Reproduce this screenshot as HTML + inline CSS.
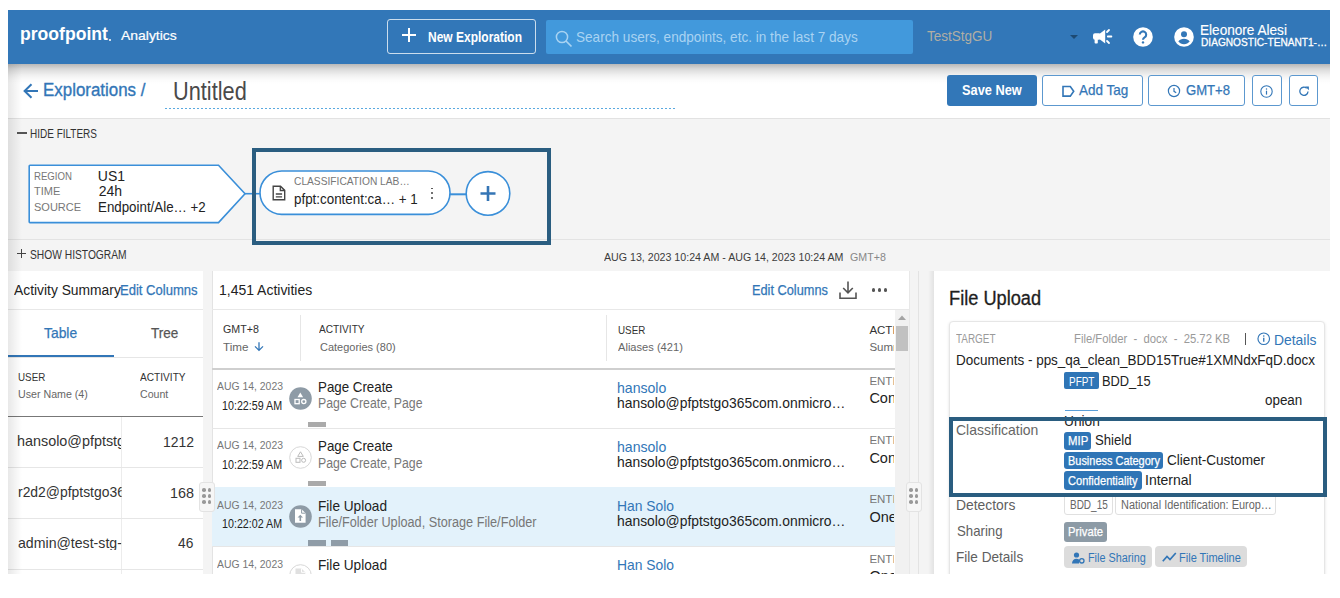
<!DOCTYPE html>
<html><head><meta charset="utf-8"><style>
html,body{margin:0;padding:0;background:#fff;width:1340px;height:598px;overflow:hidden;}
body{font-family:"Liberation Sans", sans-serif;position:relative;}
.t{position:absolute;white-space:nowrap;line-height:1;}
div{box-sizing:border-box;}
svg{position:absolute;overflow:visible;}
</style></head><body><div style="position:absolute;left:0;top:0;width:1340px;height:574px;overflow:hidden">
<div style="position:absolute;left:8px;top:10px;width:1322px;height:564px;background:#f4f4f4"></div>
<div style="position:absolute;left:8px;top:10px;width:1322px;height:54px;background:#3277b8"></div>
<div style="position:absolute;left:8px;top:64px;width:1322px;height:55px;background:#fff;border-bottom:1px solid #e2e2e2"></div>
<div style="position:absolute;left:8px;top:64px;width:1322px;height:20px;background:linear-gradient(rgba(0,0,0,.28),rgba(0,0,0,.15) 25%,rgba(0,0,0,.06) 55%,rgba(0,0,0,.015) 80%,rgba(0,0,0,0))"></div>
<div style="position:absolute;left:8px;top:239px;width:1322px;height:1px;background:#e3e3e3"></div>
<div style="position:absolute;left:109px;top:39px;width:2px;height:2px;background:#fff;border-radius:1px"></div>
<div style="position:absolute;left:387px;top:19px;width:149px;height:35px;border:1px solid rgba(255,255,255,.75);border-radius:3px"></div>
<div style="position:absolute;left:402px;top:34px;width:14px;height:2px;background:#fff"></div>
<div style="position:absolute;left:408px;top:28px;width:2px;height:14px;background:#fff"></div>
<div style="position:absolute;left:546px;top:20px;width:367px;height:34px;background:#4299dc;border-radius:2px"></div>
<svg style="left:555px;top:30px" width="18" height="18" viewBox="0 0 18 18"><circle cx="7" cy="7" r="5.6" fill="none" stroke="#a9d3f2" stroke-width="1.5"/><line x1="11" y1="11" x2="16.5" y2="16.5" stroke="#a9d3f2" stroke-width="1.7"/></svg>
<svg style="left:1070px;top:35px" width="8" height="4" viewBox="0 0 8 4"><path d="M0 0H8L4 4Z" fill="#1d4a73"/></svg>
<svg style="left:1092px;top:28px" width="21" height="17" viewBox="0 0 21 17"><rect x="1" y="5.3" width="8" height="6.4" rx="2" fill="#fff"/><path d="M8 5.5L13.2 1.5V15.5L8 11.5z" fill="#fff"/><rect x="2.6" y="10" width="3.2" height="5.6" rx=".8" fill="#fff"/><path d="M15 4l2-2M15.8 8.5h3.6M15 13l2 2" stroke="#fff" stroke-width="1.8" stroke-linecap="round"/></svg>
<svg style="left:1133px;top:26.5px" width="20" height="20" viewBox="0 0 20 20"><circle cx="10" cy="10" r="9.8" fill="#fff"/><path d="M6.8 7.6a3.2 3.2 0 1 1 4.8 2.8c-1 .6-1.6 1.1-1.6 2.4" fill="none" stroke="#3277b8" stroke-width="2.1"/><circle cx="10" cy="15.4" r="1.2" fill="#3277b8"/></svg>
<svg style="left:1174px;top:26.5px" width="20" height="20" viewBox="0 0 20 20"><circle cx="10" cy="10" r="9.8" fill="#fff"/><circle cx="10" cy="7.3" r="3" fill="#3277b8"/><path d="M4.3 14.6c1.3-2 3.3-2.9 5.7-2.9s4.4.9 5.7 2.9c-1.4 1.6-3.4 2.6-5.7 2.6s-4.3-1-5.7-2.6z" fill="#3277b8"/></svg>
<svg style="left:23px;top:83px" width="16" height="16" viewBox="0 0 16 16"><path d="M15 8H2M8.5 1.3L1.6 8l6.9 6.7" fill="none" stroke="#3276b7" stroke-width="2"/></svg>
<div style="position:absolute;left:165px;top:107.5px;width:511px;height:1.0px;background:repeating-linear-gradient(90deg,#5aa9e0 0 2px,transparent 2px 4px)"></div>
<div style="position:absolute;left:947px;top:75px;width:90px;height:31px;background:#3277b8;border-radius:3px"></div>
<div style="position:absolute;left:1042px;top:75px;width:101px;height:31px;border:1px solid #5c98cf;border-radius:3px;background:#fff"></div>
<svg style="left:1061.5px;top:82.5px" width="13" height="14" viewBox="0 0 13 14"><path d="M1 3.5h7.3l3.4 4.8-3.4 4.8H1z" fill="none" stroke="#3276b7" stroke-width="1.6"/></svg>
<div style="position:absolute;left:1148px;top:75px;width:97px;height:31px;border:1px solid #5c98cf;border-radius:3px;background:#fff"></div>
<svg style="left:1167px;top:84px" width="14" height="14" viewBox="0 0 14 14"><circle cx="7" cy="7" r="5.6" fill="none" stroke="#3276b7" stroke-width="1.2"/><path d="M7 4V7.3l2.2 1.4" fill="none" stroke="#3276b7" stroke-width="1.2"/></svg>
<div style="position:absolute;left:1252px;top:75px;width:30px;height:31px;border:1px solid #5c98cf;border-radius:3px;background:#fff"></div>
<svg style="left:1260px;top:84.5px" width="13" height="13" viewBox="0 0 13 13"><circle cx="6.5" cy="6.5" r="5.7" fill="none" stroke="#3276b7" stroke-width="1.1"/><path d="M6.5 5.7v3.9" stroke="#3276b7" stroke-width="1.2"/><circle cx="6.5" cy="3.9" r=".75" fill="#3276b7"/></svg>
<div style="position:absolute;left:1289px;top:75px;width:29px;height:31px;border:1px solid #5c98cf;border-radius:3px;background:#fff"></div>
<svg style="left:1297.5px;top:85px" width="12" height="12" viewBox="0 0 12 12"><path d="M10 6.5A4.1 4.1 0 1 1 8.7 3.3" fill="none" stroke="#3276b7" stroke-width="1.3"/><path d="M7.3 1.6h3.6v3.6z" fill="#3276b7"/></svg>
<div style="position:absolute;left:17.3px;top:132.4px;width:9.599999999999998px;height:1.4000000000000057px;background:#555"></div>
<svg style="left:0;top:0" width="1340" height="598"><path d="M30 165.2H218.5L245 193.7L218.5 222.6H30Q29.2 222.6 29.2 221.8V166Q29.2 165.2 30 165.2Z" fill="#fff" stroke="#3a8fd9" stroke-width="1.6"/><path d="M245 193.7H260" stroke="#3a8fd9" stroke-width="1.6"/><rect x="260" y="171" width="190" height="43.4" rx="21.7" fill="#fff" stroke="#3a8fd9" stroke-width="1.6"/><path d="M450 194.3H467" stroke="#3a8fd9" stroke-width="2"/><circle cx="488" cy="193.4" r="21.8" fill="#fff" stroke="#3a8fd9" stroke-width="1.6"/><path d="M488 186v15M480.5 193.5h15" stroke="#3575b5" stroke-width="2.6"/></svg>
<svg style="left:272px;top:185px" width="14" height="16" viewBox="0 0 14 16"><path d="M1.2 1.2h7.3l4.2 4.2v9.4H1.2z" fill="none" stroke="#444" stroke-width="1.4"/><path d="M8.3 1.2v4.3h4.3M3.8 9h6.3M3.8 11.8h6.3" fill="none" stroke="#444" stroke-width="1.3"/></svg>
<div style="position:absolute;left:431.4px;top:187.6px;width:1.900000000000034px;height:1.9000000000000057px;background:#444;border-radius:50%"></div>
<div style="position:absolute;left:431.4px;top:192.4px;width:1.900000000000034px;height:1.9000000000000057px;background:#444;border-radius:50%"></div>
<div style="position:absolute;left:431.4px;top:197.2px;width:1.900000000000034px;height:1.9000000000000057px;background:#444;border-radius:50%"></div>
<div style="position:absolute;left:17.2px;top:253px;width:9.100000000000001px;height:1.4000000000000057px;background:#444"></div>
<div style="position:absolute;left:21px;top:249px;width:1.3999999999999986px;height:9px;background:#444"></div>
<div style="position:absolute;left:8px;top:270.5px;width:194.6px;height:303.5px;background:#fff"></div>
<div style="position:absolute;left:8px;top:309px;width:194.6px;height:1px;background:#e8e8e8"></div>
<div style="position:absolute;left:8px;top:357px;width:194.6px;height:1px;background:#e6e6e6"></div>
<div style="position:absolute;left:8px;top:355.2px;width:105.6px;height:2.1999999999999886px;background:#3276b7"></div>
<div style="position:absolute;left:8px;top:415.5px;width:194.6px;height:1.5px;background:#777"></div>
<div style="position:absolute;left:121px;top:417px;width:1px;height:157px;background:#ececec"></div>
<div style="position:absolute;left:8px;top:467.2px;width:194.6px;height:1.0px;background:#e6e6e6"></div>
<div style="position:absolute;left:8px;top:517.9px;width:194.6px;height:1.0px;background:#e6e6e6"></div>
<div style="position:absolute;left:8px;top:568.6px;width:194.6px;height:1.0px;background:#e6e6e6"></div>
<div style="position:absolute;left:212px;top:270.5px;width:697px;height:303.5px;background:#fff;border-left:1px solid #e3e3e3"></div>
<div style="position:absolute;left:212px;top:309px;width:697px;height:1px;background:#e8e8e8"></div>
<svg style="left:839px;top:281px" width="18" height="18" viewBox="0 0 18 18"><path d="M9 0.5v11M4.2 7l4.8 4.8L13.8 7" fill="none" stroke="#555" stroke-width="1.6"/><path d="M1 11.5v5.8h16v-5.8" fill="none" stroke="#555" stroke-width="1.6"/></svg>
<div style="position:absolute;left:871.9px;top:288.4px;width:3.2000000000000455px;height:3.2000000000000455px;background:#555;border-radius:50%"></div>
<div style="position:absolute;left:877.9px;top:288.4px;width:3.2000000000000455px;height:3.2000000000000455px;background:#555;border-radius:50%"></div>
<div style="position:absolute;left:883.9px;top:288.4px;width:3.2000000000000455px;height:3.2000000000000455px;background:#555;border-radius:50%"></div>
<svg style="left:253.5px;top:342.3px" width="10" height="9" viewBox="0 0 10 9"><path d="M5 0.3v8.2M1 4.4L5 8.4l4-4" fill="none" stroke="#3276b7" stroke-width="1.3"/></svg>
<div style="position:absolute;left:300px;top:315px;width:1px;height:46px;background:#e6e6e6"></div>
<div style="position:absolute;left:605.5px;top:315px;width:1.0px;height:46px;background:#e6e6e6"></div>
<div style="position:absolute;left:212px;top:368.2px;width:683px;height:1.8000000000000114px;background:#cfcfcf"></div>
<div style="position:absolute;left:212px;top:427.8px;width:683px;height:1.0px;background:#e6e6e6"></div>
<svg style="left:289.2px;top:386.5px" width="23" height="23" viewBox="0 0 23 23"><circle cx="11.5" cy="11.5" r="11.3" fill="#8e9ba6"/><path d="M11.3 5.4l2.8 4.8H8.5z" fill="#fff"/><rect x="6" y="12.5" width="4.2" height="4.2" fill="none" stroke="#fff" stroke-width="1.3"/><circle cx="14.8" cy="14.6" r="2.1" fill="none" stroke="#fff" stroke-width="1.3"/></svg>
<div style="position:absolute;left:308.2px;top:421.59999999999997px;width:17.80000000000001px;height:5.800000000000011px;background:#aaaaaa"></div>
<div style="position:absolute;left:212px;top:486.90000000000003px;width:683px;height:1.0px;background:#e6e6e6"></div>
<svg style="left:289.2px;top:445.6px" width="23" height="23" viewBox="0 0 23 23"><circle cx="11.5" cy="11.5" r="10.8" fill="#fff" stroke="#d8d8d8" stroke-width="1"/><path d="M11.5 5.8l2.8 4.6H8.7z" fill="none" stroke="#bbb" stroke-width="1"/><rect x="7" y="12.3" width="4" height="4" fill="none" stroke="#bbb" stroke-width="1"/><circle cx="14.6" cy="14.3" r="2" fill="none" stroke="#bbb" stroke-width="1"/></svg>
<div style="position:absolute;left:308.2px;top:480.7px;width:17.80000000000001px;height:5.800000000000011px;background:#aaaaaa"></div>
<div style="position:absolute;left:212px;top:487.4px;width:683px;height:59.10000000000002px;background:#e3f2fb"></div>
<div style="position:absolute;left:212px;top:546.0px;width:683px;height:1.0px;background:#e6e6e6"></div>
<svg style="left:289.2px;top:504.70000000000005px" width="23" height="23" viewBox="0 0 23 23"><circle cx="11.5" cy="11.5" r="11.3" fill="#8e9ba6"/><path d="M6 4.2h6.6l4 4v9.5H6z" fill="#fff"/><path d="M12.6 4.2v4h4" fill="none" stroke="#8e9ba6" stroke-width="1"/><path d="M11.3 16v-4.2" stroke="#8e9ba6" stroke-width="1.6"/><path d="M8.6 12.6l2.7-2.8 2.7 2.8z" fill="#8e9ba6"/></svg>
<div style="position:absolute;left:308.2px;top:539.8px;width:17.80000000000001px;height:5.800000000000068px;background:#8f9ca7"></div>
<div style="position:absolute;left:330.6px;top:539.8px;width:17.399999999999977px;height:5.800000000000068px;background:#8f9ca7"></div>
<div style="position:absolute;left:212px;top:605.1px;width:683px;height:1.0px;background:#e6e6e6"></div>
<svg style="left:289.2px;top:563.8px" width="23" height="23" viewBox="0 0 23 23"><circle cx="11.5" cy="11.5" r="10.8" fill="#fff" stroke="#d8d8d8" stroke-width="1"/><path d="M6.5 4.5h6l3.8 3.8v9.5H6.5z" fill="#e0e0e0"/><path d="M12.5 4.5v3.8h3.8" fill="none" stroke="#fff" stroke-width="1"/></svg>
<div style="position:absolute;left:308.2px;top:598.9px;width:17.80000000000001px;height:5.800000000000068px;background:#aaaaaa"></div>
<div style="position:absolute;left:330.6px;top:598.9px;width:17.399999999999977px;height:5.800000000000068px;background:#aaaaaa"></div>
<div style="position:absolute;left:895px;top:310px;width:14px;height:264px;background:#f1f1f1"></div>
<div style="position:absolute;left:896px;top:326px;width:12px;height:24.600000000000023px;background:#c1c1c1"></div>
<svg style="left:898px;top:315px" width="8" height="5" viewBox="0 0 8 5"><path d="M0 5L4 0.5L8 5Z" fill="#a3a3a3"/></svg>
<div style="position:absolute;left:918px;top:270.5px;width:1px;height:303.5px;background:#e3e3e3"></div>
<div style="position:absolute;left:909px;top:270.5px;width:1px;height:303.5px;background:#e8e8e8"></div>
<div style="position:absolute;left:199.2px;top:481.7px;width:16.30000000000001px;height:30.80000000000001px;background:#f6f6f6;border:1px solid #e3e3e3;border-radius:3px"></div>
<div style="position:absolute;left:202.39999999999998px;top:488.29999999999995px;width:3.6000000000000227px;height:3.6000000000000227px;background:#999;border-radius:50%"></div>
<div style="position:absolute;left:202.39999999999998px;top:494.4px;width:3.6000000000000227px;height:3.6000000000000227px;background:#999;border-radius:50%"></div>
<div style="position:absolute;left:202.39999999999998px;top:500.0px;width:3.6000000000000227px;height:3.6000000000000227px;background:#999;border-radius:50%"></div>
<div style="position:absolute;left:207.89999999999998px;top:488.29999999999995px;width:3.6000000000000227px;height:3.6000000000000227px;background:#999;border-radius:50%"></div>
<div style="position:absolute;left:207.89999999999998px;top:494.4px;width:3.6000000000000227px;height:3.6000000000000227px;background:#999;border-radius:50%"></div>
<div style="position:absolute;left:207.89999999999998px;top:500.0px;width:3.6000000000000227px;height:3.6000000000000227px;background:#999;border-radius:50%"></div>
<div style="position:absolute;left:905.8px;top:481.7px;width:16.299999999999955px;height:30.80000000000001px;background:#f6f6f6;border:1px solid #e3e3e3;border-radius:3px"></div>
<div style="position:absolute;left:909.0px;top:488.29999999999995px;width:3.599999999999909px;height:3.6000000000000227px;background:#999;border-radius:50%"></div>
<div style="position:absolute;left:909.0px;top:494.4px;width:3.599999999999909px;height:3.6000000000000227px;background:#999;border-radius:50%"></div>
<div style="position:absolute;left:909.0px;top:500.0px;width:3.599999999999909px;height:3.6000000000000227px;background:#999;border-radius:50%"></div>
<div style="position:absolute;left:914.5px;top:488.29999999999995px;width:3.599999999999909px;height:3.6000000000000227px;background:#999;border-radius:50%"></div>
<div style="position:absolute;left:914.5px;top:494.4px;width:3.599999999999909px;height:3.6000000000000227px;background:#999;border-radius:50%"></div>
<div style="position:absolute;left:914.5px;top:500.0px;width:3.599999999999909px;height:3.6000000000000227px;background:#999;border-radius:50%"></div>
<div style="position:absolute;left:934px;top:270.5px;width:396px;height:303.5px;background:#fff"></div>
<div style="position:absolute;left:928px;top:270.5px;width:6px;height:303.5px;background:linear-gradient(90deg,rgba(0,0,0,0),rgba(0,0,0,.07))"></div>
<div style="position:absolute;left:948.5px;top:321px;width:376.79999999999995px;height:279px;border:1px solid #e6e6e6;border-radius:4px;background:#fff;box-shadow:0 1px 3px rgba(0,0,0,.12)"></div>
<div style="position:absolute;left:1244.7px;top:333.4px;width:1.0px;height:11.600000000000023px;background:#555"></div>
<svg style="left:1257px;top:332px" width="13.5" height="13.5" viewBox="0 0 14 14"><circle cx="7" cy="7" r="6" fill="none" stroke="#3276b7" stroke-width="1.2"/><path d="M7 6v4.2" stroke="#3276b7" stroke-width="1.4"/><circle cx="7" cy="4.1" r=".85" fill="#3276b7"/></svg>
<div style="position:absolute;left:1064.2px;top:372.4px;width:34.5px;height:16.5px;background:#2f75b6;border-radius:2px"></div>
<div style="position:absolute;left:1064.6px;top:410px;width:33.40000000000009px;height:1px;background:#5a9fd8"></div>
<div style="position:absolute;left:1064px;top:431.8px;width:27px;height:18.0px;background:#2f75b6;border-radius:3px"></div>
<div style="position:absolute;left:1064px;top:451.5px;width:99px;height:17.899999999999977px;background:#2f75b6;border-radius:3px"></div>
<div style="position:absolute;left:1064px;top:471px;width:77.5px;height:18.5px;background:#2f75b6;border-radius:3px"></div>
<div style="position:absolute;left:1064.2px;top:494px;width:48.59999999999991px;height:21.299999999999955px;border:1px solid #e0e0e0;border-radius:3px;background:#fff"></div>
<div style="position:absolute;left:1115.4px;top:494px;width:161.0px;height:21.299999999999955px;border:1px solid #e0e0e0;border-radius:3px;background:#fff"></div>
<div style="position:absolute;left:1064.2px;top:522px;width:43.09999999999991px;height:19.899999999999977px;background:#8d9ba6;border-radius:3px"></div>
<div style="position:absolute;left:1064.2px;top:546px;width:87.79999999999995px;height:22px;background:#dcdcdc;border-radius:4px"></div>
<svg style="left:1072px;top:551.5px" width="13" height="12" viewBox="0 0 13 12"><circle cx="4.5" cy="3" r="2.6" fill="#3276b7"/><path d="M0 11.5c0-3 2-4.8 4.5-4.8 1 0 1.8.2 2.5.7V11.5z" fill="#3276b7"/><circle cx="9.8" cy="8.8" r="2.2" fill="none" stroke="#3276b7" stroke-width="1.3"/></svg>
<div style="position:absolute;left:1155.2px;top:546px;width:91.70000000000005px;height:21.399999999999977px;background:#dcdcdc;border-radius:4px"></div>
<svg style="left:1161.5px;top:552px" width="14.5" height="10" viewBox="0 0 14.5 10"><path d="M0.8 9.2L5 4.5l3 3L13.8 1" fill="none" stroke="#3276b7" stroke-width="1.7"/></svg>
<div class="t" style="left:20.02px;top:25.36px;font-size:18px;color:#fff;font-weight:700;transform:scaleX(0.9778);transform-origin:0 0;">proofpoint</div>
<div class="t" style="left:121.00px;top:29.17px;font-size:13.5px;color:#fff;transform:scaleX(1.0319);transform-origin:0 0;-webkit-text-stroke:0.2px #fff;">Analytics</div>
<div class="t" style="left:427.50px;top:29.65px;font-size:14px;color:#fff;font-weight:700;transform:scaleX(0.8568);transform-origin:0 0;">New Exploration</div>
<div class="t" style="left:575.50px;top:30.03px;font-size:14.5px;color:#a9d3f2;transform:scaleX(0.9371);transform-origin:0 0;">Search users, endpoints, etc. in the last 7 days</div>
<div class="t" style="left:926.70px;top:28.30px;font-size:15px;color:#b0aea4;transform:scaleX(0.9011);transform-origin:0 0;">TestStgGU</div>
<div class="t" style="left:1199.56px;top:22.53px;font-size:14.5px;color:#fff;transform:scaleX(0.9374);transform-origin:0 0;-webkit-text-stroke:0.15px #fff;">Eleonore Alesi</div>
<div class="t" style="left:1200.50px;top:36.97px;font-size:11.5px;color:#fff;transform:scaleX(0.8813);transform-origin:0 0;-webkit-text-stroke:0.3px #fff;">DIAGNOSTIC-TENANT1-…</div>
<div class="t" style="left:43.06px;top:80.56px;font-size:18px;color:#3276b7;transform:scaleX(0.9393);transform-origin:0 0;-webkit-text-stroke:0.35px currentColor;">Explorations /</div>
<div class="t" style="left:173.23px;top:78.64px;font-size:25px;color:#4a4a4a;transform:scaleX(0.8701);transform-origin:0 0;">Untitled</div>
<div class="t" style="left:962.00px;top:83.33px;font-size:14.5px;color:#fff;font-weight:700;transform:scaleX(0.8827);transform-origin:0 0;">Save New</div>
<div class="t" style="left:1079.00px;top:83.33px;font-size:14.5px;color:#3276b7;transform:scaleX(0.9296);transform-origin:0 0;-webkit-text-stroke:0.25px currentColor;">Add Tag</div>
<div class="t" style="left:1185.50px;top:83.33px;font-size:14.5px;color:#3276b7;transform:scaleX(0.9038);transform-origin:0 0;-webkit-text-stroke:0.25px currentColor;">GMT+8</div>
<div class="t" style="left:30.40px;top:127.54px;font-size:12px;color:#333;transform:scaleX(0.8328);transform-origin:0 0;">HIDE FILTERS</div>
<div class="t" style="left:34.00px;top:171.09px;font-size:11px;color:#777;transform:scaleX(0.8746);transform-origin:0 0;">REGION</div>
<div class="t" style="left:34.00px;top:186.49px;font-size:11px;color:#777;">TIME</div>
<div class="t" style="left:34.00px;top:202.49px;font-size:11px;color:#777;">SOURCE</div>
<div class="t" style="left:97.80px;top:168.55px;font-size:14px;color:#222;">US1</div>
<div class="t" style="left:98.80px;top:184.15px;font-size:14px;color:#222;">24h</div>
<div class="t" style="left:97.85px;top:200.15px;font-size:14px;color:#222;transform:scaleX(0.9515);transform-origin:0 0;">Endpoint/Ale… +2</div>
<div class="t" style="left:293.70px;top:175.89px;font-size:11px;color:#777;transform:scaleX(0.9288);transform-origin:0 0;">CLASSIFICATION LAB…</div>
<div class="t" style="left:293.70px;top:191.85px;font-size:14px;color:#222;transform:scaleX(0.9553);transform-origin:0 0;">pfpt:content:ca… + 1</div>
<div class="t" style="left:30.40px;top:248.94px;font-size:12px;color:#333;transform:scaleX(0.8540);transform-origin:0 0;">SHOW HISTOGRAM</div>
<div class="t" style="left:603.60px;top:251.69px;font-size:11px;color:#3c3c3c;transform:scaleX(0.9667);transform-origin:0 0;">AUG 13, 2023 10:24 AM - AUG 14, 2023 10:24 AM</div>
<div class="t" style="left:850.30px;top:251.69px;font-size:11px;color:#888;transform:scaleX(0.9685);transform-origin:0 0;">GMT+8</div>
<div class="t" style="left:14.40px;top:282.55px;font-size:14px;color:#222;transform:scaleX(0.9878);transform-origin:0 0;">Activity Summary</div>
<div class="t" style="left:120.27px;top:282.55px;font-size:14px;color:#3276b7;transform:scaleX(0.9325);transform-origin:0 0;-webkit-text-stroke:0.25px currentColor;">Edit Columns</div>
<div class="t" style="left:44.00px;top:324.80px;font-size:15px;color:#3276b7;transform:scaleX(0.9235);transform-origin:0 0;-webkit-text-stroke:0.25px currentColor;">Table</div>
<div class="t" style="left:151.00px;top:324.80px;font-size:15px;color:#555;transform:scaleX(0.9017);transform-origin:0 0;-webkit-text-stroke:0.25px currentColor;">Tree</div>
<div class="t" style="left:17.60px;top:371.77px;font-size:11.5px;color:#333;transform:scaleX(0.8532);transform-origin:0 0;">USER</div>
<div class="t" style="left:17.60px;top:389.07px;font-size:11.5px;color:#666;transform:scaleX(0.9263);transform-origin:0 0;">User Name (4)</div>
<div class="t" style="left:139.80px;top:371.77px;font-size:11.5px;color:#333;transform:scaleX(0.8812);transform-origin:0 0;">ACTIVITY</div>
<div class="t" style="left:139.80px;top:389.07px;font-size:11.5px;color:#666;transform:scaleX(0.9209);transform-origin:0 0;">Count</div>
<div class="t" style="left:16.91px;top:434.33px;font-size:14.5px;color:#333;transform:scaleX(0.9915);transform-origin:0 0;width:104.98px;overflow:hidden">hansolo@pfptstgo365com</div>
<div class="t" style="left:162.57px;top:433.90px;font-size:15px;color:#333;transform:scaleX(0.9305);transform-origin:0 0;">1212</div>
<div class="t" style="left:17.90px;top:485.03px;font-size:14.5px;color:#333;transform:scaleX(0.9590);transform-origin:0 0;width:107.50px;overflow:hidden">r2d2@pfptstgo365com</div>
<div class="t" style="left:169.64px;top:484.60px;font-size:15px;color:#333;transform:scaleX(0.9584);transform-origin:0 0;">168</div>
<div class="t" style="left:17.90px;top:535.73px;font-size:14.5px;color:#333;transform:scaleX(0.9745);transform-origin:0 0;width:105.80px;overflow:hidden">admin@test-stg-gu</div>
<div class="t" style="left:178.30px;top:535.30px;font-size:15px;color:#333;transform:scaleX(0.9179);transform-origin:0 0;">46</div>
<div class="t" style="left:219.07px;top:282.10px;font-size:15px;color:#222;transform:scaleX(0.9317);transform-origin:0 0;">1,451 Activities</div>
<div class="t" style="left:751.99px;top:282.65px;font-size:14px;color:#3276b7;transform:scaleX(0.9118);transform-origin:0 0;-webkit-text-stroke:0.25px currentColor;">Edit Columns</div>
<div class="t" style="left:223.40px;top:324.37px;font-size:11.5px;color:#333;transform:scaleX(0.9277);transform-origin:0 0;">GMT+8</div>
<div class="t" style="left:223.40px;top:341.57px;font-size:11.5px;color:#666;transform:scaleX(1.0108);transform-origin:0 0;">Time</div>
<div class="t" style="left:319.00px;top:324.37px;font-size:11.5px;color:#333;transform:scaleX(0.8812);transform-origin:0 0;">ACTIVITY</div>
<div class="t" style="left:319.50px;top:341.57px;font-size:11.5px;color:#666;transform:scaleX(0.9543);transform-origin:0 0;">Categories (80)</div>
<div class="t" style="left:618.00px;top:324.67px;font-size:11.5px;color:#333;transform:scaleX(0.8532);transform-origin:0 0;">USER</div>
<div class="t" style="left:618.00px;top:341.87px;font-size:11.5px;color:#666;transform:scaleX(0.9661);transform-origin:0 0;">Aliases (421)</div>
<div class="t" style="left:869.40px;top:324.67px;font-size:11.5px;color:#333;width:24.90px;overflow:hidden">ACTIVITY</div>
<div class="t" style="left:869.40px;top:341.87px;font-size:11.5px;color:#666;width:24.90px;overflow:hidden">Summary</div>
<div class="t" style="left:217.40px;top:381.37px;font-size:11.5px;color:#777;transform:scaleX(0.9050);transform-origin:0 0;">AUG 14, 2023</div>
<div class="t" style="left:222.30px;top:399.54px;font-size:12px;color:#222;transform:scaleX(0.8920);transform-origin:0 0;">10:22:59 AM</div>
<div class="t" style="left:318.28px;top:380.33px;font-size:14.5px;color:#222;transform:scaleX(0.9185);transform-origin:0 0;">Page Create</div>
<div class="t" style="left:318.32px;top:396.45px;font-size:14px;color:#777;transform:scaleX(0.8775);transform-origin:0 0;">Page Create, Page</div>
<div class="t" style="left:617.03px;top:381.03px;font-size:14.5px;color:#3276b7;transform:scaleX(0.9713);transform-origin:0 0;">hansolo</div>
<div class="t" style="left:617.04px;top:396.23px;font-size:14.5px;color:#222;transform:scaleX(0.9565);transform-origin:0 0;">hansolo@pfptstgo365com.onmicro…</div>
<div class="t" style="left:869.40px;top:376.27px;font-size:11.5px;color:#777;width:24.90px;overflow:hidden">ENTITY</div>
<div class="t" style="left:869.40px;top:391.43px;font-size:14.5px;color:#222;width:24.90px;overflow:hidden">Content</div>
<div class="t" style="left:217.40px;top:440.47px;font-size:11.5px;color:#777;transform:scaleX(0.9050);transform-origin:0 0;">AUG 14, 2023</div>
<div class="t" style="left:222.30px;top:458.64px;font-size:12px;color:#222;transform:scaleX(0.8920);transform-origin:0 0;">10:22:59 AM</div>
<div class="t" style="left:318.28px;top:439.43px;font-size:14.5px;color:#222;transform:scaleX(0.9185);transform-origin:0 0;">Page Create</div>
<div class="t" style="left:318.32px;top:455.55px;font-size:14px;color:#777;transform:scaleX(0.8775);transform-origin:0 0;">Page Create, Page</div>
<div class="t" style="left:617.03px;top:440.13px;font-size:14.5px;color:#3276b7;transform:scaleX(0.9713);transform-origin:0 0;">hansolo</div>
<div class="t" style="left:617.04px;top:455.33px;font-size:14.5px;color:#222;transform:scaleX(0.9565);transform-origin:0 0;">hansolo@pfptstgo365com.onmicro…</div>
<div class="t" style="left:869.40px;top:435.37px;font-size:11.5px;color:#777;width:24.90px;overflow:hidden">ENTITY</div>
<div class="t" style="left:869.40px;top:450.53px;font-size:14.5px;color:#222;width:24.90px;overflow:hidden">Content</div>
<div class="t" style="left:217.40px;top:499.57px;font-size:11.5px;color:#777;transform:scaleX(0.9050);transform-origin:0 0;">AUG 14, 2023</div>
<div class="t" style="left:222.30px;top:517.74px;font-size:12px;color:#222;transform:scaleX(0.8920);transform-origin:0 0;">10:22:02 AM</div>
<div class="t" style="left:318.26px;top:498.53px;font-size:14.5px;color:#222;transform:scaleX(0.9408);transform-origin:0 0;">File Upload</div>
<div class="t" style="left:318.29px;top:514.65px;font-size:14px;color:#777;transform:scaleX(0.9062);transform-origin:0 0;">File/Folder Upload, Storage File/Folder</div>
<div class="t" style="left:617.04px;top:499.23px;font-size:14.5px;color:#3276b7;transform:scaleX(0.9559);transform-origin:0 0;">Han Solo</div>
<div class="t" style="left:617.04px;top:514.43px;font-size:14.5px;color:#222;transform:scaleX(0.9565);transform-origin:0 0;">hansolo@pfptstgo365com.onmicro…</div>
<div class="t" style="left:869.40px;top:494.47px;font-size:11.5px;color:#777;width:24.90px;overflow:hidden">ENTITY</div>
<div class="t" style="left:869.40px;top:509.63px;font-size:14.5px;color:#222;width:24.90px;overflow:hidden">Onetent</div>
<div class="t" style="left:217.40px;top:558.67px;font-size:11.5px;color:#777;transform:scaleX(0.9050);transform-origin:0 0;">AUG 14, 2023</div>
<div class="t" style="left:222.30px;top:576.84px;font-size:12px;color:#222;transform:scaleX(0.8920);transform-origin:0 0;">10:22:02 AM</div>
<div class="t" style="left:318.26px;top:557.63px;font-size:14.5px;color:#222;transform:scaleX(0.9408);transform-origin:0 0;">File Upload</div>
<div class="t" style="left:318.29px;top:573.75px;font-size:14px;color:#777;transform:scaleX(0.9062);transform-origin:0 0;">File/Folder Upload, Storage File/Folder</div>
<div class="t" style="left:617.04px;top:558.33px;font-size:14.5px;color:#3276b7;transform:scaleX(0.9559);transform-origin:0 0;">Han Solo</div>
<div class="t" style="left:617.04px;top:573.53px;font-size:14.5px;color:#222;transform:scaleX(0.9565);transform-origin:0 0;">hansolo@pfptstgo365com.onmicro…</div>
<div class="t" style="left:869.40px;top:553.57px;font-size:11.5px;color:#777;width:24.90px;overflow:hidden">ENTITY</div>
<div class="t" style="left:869.40px;top:568.73px;font-size:14.5px;color:#222;width:24.90px;overflow:hidden">Onetent</div>
<div class="t" style="left:948.87px;top:289.49px;font-size:19.5px;color:#1e1e1e;transform:scaleX(0.9340);transform-origin:0 0;-webkit-text-stroke:0.3px currentColor;">File Upload</div>
<div class="t" style="left:956.40px;top:332.64px;font-size:12px;color:#9a9a9a;transform:scaleX(0.8256);transform-origin:0 0;">TARGET</div>
<div class="t" style="left:1074.20px;top:332.64px;font-size:12px;color:#9a9a9a;transform:scaleX(0.9400);transform-origin:0 0;white-space:pre;">File/Folder  -  docx  -  25.72 KB</div>
<div class="t" style="left:1273.84px;top:332.63px;font-size:14.5px;color:#3276b7;transform:scaleX(0.9566);transform-origin:0 0;">Details</div>
<div class="t" style="left:955.50px;top:352.00px;font-size:15px;color:#222;transform:scaleX(0.8984);transform-origin:0 0;">Documents - pps_qa_clean_BDD15True#1XMNdxFqD.docx</div>
<div class="t" style="left:1068.50px;top:376.04px;font-size:12px;color:#fff;transform:scaleX(0.8297);transform-origin:0 0;">PFPT</div>
<div class="t" style="left:1101.94px;top:373.10px;font-size:15px;color:#222;transform:scaleX(0.8563);transform-origin:0 0;">BDD_15</div>
<div class="t" style="left:1264.80px;top:393.45px;font-size:14px;color:#222;transform:scaleX(0.9569);transform-origin:0 0;">opean</div>
<div class="t" style="left:1063.82px;top:413.08px;font-size:15.5px;color:#222;transform:scaleX(0.8848);transform-origin:0 0;">Union</div>
<div class="t" style="left:956.40px;top:423.23px;font-size:14.5px;color:#666;transform:scaleX(0.9642);transform-origin:0 0;">Classification</div>
<div class="t" style="left:1067.59px;top:434.62px;font-size:12.5px;color:#fff;transform:scaleX(0.9097);transform-origin:0 0;-webkit-text-stroke:0.25px currentColor;">MIP</div>
<div class="t" style="left:1095.10px;top:432.63px;font-size:14.5px;color:#222;transform:scaleX(0.9045);transform-origin:0 0;">Shield</div>
<div class="t" style="left:1068.00px;top:454.94px;font-size:12px;color:#fff;transform:scaleX(0.9125);transform-origin:0 0;-webkit-text-stroke:0.25px currentColor;">Business Category</div>
<div class="t" style="left:1167.00px;top:452.63px;font-size:14.5px;color:#222;transform:scaleX(0.9359);transform-origin:0 0;">Client-Customer</div>
<div class="t" style="left:1068.00px;top:474.64px;font-size:12px;color:#fff;transform:scaleX(0.9221);transform-origin:0 0;-webkit-text-stroke:0.25px currentColor;">Confidentiality</div>
<div class="t" style="left:1144.73px;top:472.63px;font-size:14.5px;color:#222;transform:scaleX(0.9652);transform-origin:0 0;">Internal</div>
<div class="t" style="left:956.04px;top:498.43px;font-size:14.5px;color:#606060;transform:scaleX(0.9572);transform-origin:0 0;">Detectors</div>
<div class="t" style="left:1069.50px;top:498.64px;font-size:12px;color:#666;transform:scaleX(0.8318);transform-origin:0 0;">BDD_15</div>
<div class="t" style="left:1121.10px;top:498.64px;font-size:12px;color:#666;transform:scaleX(0.9116);transform-origin:0 0;">National Identification: Europ…</div>
<div class="t" style="left:956.50px;top:523.93px;font-size:14.5px;color:#606060;transform:scaleX(0.9116);transform-origin:0 0;">Sharing</div>
<div class="t" style="left:1067.90px;top:525.62px;font-size:12.5px;color:#fff;transform:scaleX(0.9011);transform-origin:0 0;-webkit-text-stroke:0.25px currentColor;">Private</div>
<div class="t" style="left:956.06px;top:549.63px;font-size:14.5px;color:#606060;transform:scaleX(0.9366);transform-origin:0 0;">File Details</div>
<div class="t" style="left:1088.03px;top:552.12px;font-size:12.5px;color:#3276b7;transform:scaleX(0.8670);transform-origin:0 0;">File Sharing</div>
<div class="t" style="left:1178.72px;top:552.12px;font-size:12.5px;color:#3276b7;transform:scaleX(0.8814);transform-origin:0 0;">File Timeline</div>
<div style="position:absolute;left:8px;top:64px;width:14px;height:510px;background:linear-gradient(90deg,rgba(0,0,0,.09),rgba(0,0,0,0))"></div>
<div style="position:absolute;left:252px;top:147.7px;width:299px;height:97.30000000000001px;border:4px solid #2a5d80"></div>
<div style="position:absolute;left:949.2px;top:417px;width:377.79999999999995px;height:79.69999999999999px;border:4px solid #2a5d80"></div>
</div></body></html>
